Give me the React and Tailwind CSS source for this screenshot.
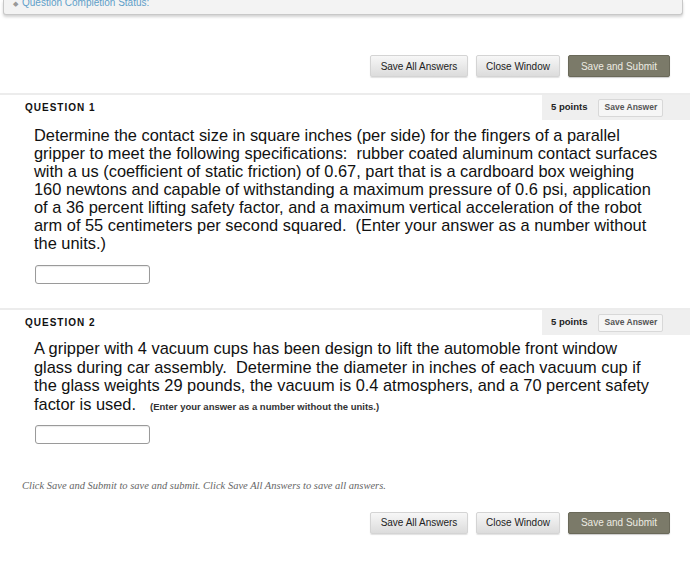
import React from 'react';

const btn =
  'h-[22px] whitespace-nowrap rounded-[2px] border border-[#d4d4d4] bg-gradient-to-b from-[#f7f7f7] to-[#dcdcdc] text-[10px] text-[#222] shadow-[0_1px_1px_rgba(0,0,0,0.12)]';
const submitBtn =
  'h-[22px] whitespace-nowrap rounded-[2px] border border-[#6a6959] bg-[#7b7a69] text-[10px] text-[#ecebe2] shadow-[0_1px_1px_rgba(0,0,0,0.2)]';

const ActionBar = () => (
  <div className="flex justify-end gap-2 pr-[30px]">
    <button className={`${btn} w-[98px]`}>Save All Answers</button>
    <button className={`${btn} w-[84px]`}>Close Window</button>
    <button className={`${submitBtn} w-[102px]`}>Save and Submit</button>
  </div>
);

const QuestionHeader = ({ number }) => (
  <div className="mr-[10px] flex items-stretch justify-between border-t-2 border-[#ececec]">
    <div className="flex items-center pl-[25px] text-[10px] font-bold tracking-[1px] text-[#111]">
      QUESTION {number}
    </div>
    <div className="flex h-[25px] w-[148px] items-center bg-[#efefef] pl-[9px]">
      <span className="whitespace-nowrap text-[9.5px] font-bold text-[#222]">5 points</span>
      <button className="ml-[11px] h-[18px] w-[65px] whitespace-nowrap rounded-[2px] border border-[#d8d8d8] bg-[#f6f6f6] text-[8.5px] font-bold text-[#555]">
        Save Answer
      </button>
    </div>
  </div>
);

const AnswerBox = () => (
  <div className="ml-[35px] h-[19px] w-[115px] rounded-[3px] border border-[#9a9a9a] bg-white shadow-[inset_0_1px_1px_rgba(0,0,0,0.08)]" />
);

const q1Lines = [
  'Determine the contact size in square inches (per side) for the fingers of a parallel',
  'gripper to meet the following specifications:\u00a0 rubber coated aluminum contact surfaces',
  'with a us (coefficient of static friction) of 0.67, part that is a cardboard box weighing',
  '160 newtons and capable of withstanding a maximum pressure of 0.6 psi, application',
  'of a 36 percent lifting safety factor, and a maximum vertical acceleration of the robot',
  'arm of 55 centimeters per second squared.\u00a0 (Enter your answer as a number without',
  'the units.)',
];

const q2Lines = [
  'A gripper with 4 vacuum cups has been design to lift the automoble front window',
  'glass during car assembly.\u00a0 Determine the diameter in inches of each vacuum cup if',
  'the glass weights 29 pounds, the vacuum is 0.4 atmosphers, and a 70 percent safety',
];

export default function App() {
  return (
    <div
      className="h-[571px] w-[700px] overflow-hidden bg-white"
      style={{ fontFamily: '"Liberation Sans", Arial, sans-serif' }}
    >
      <div className="mx-[3px] mr-[17px] flex h-[15px] items-end overflow-hidden rounded-b-[3px] border border-t-0 border-[#c8c8c8] bg-[#f3f3f3] pb-[6px] pl-[9px] shadow-[0_2px_3px_rgba(0,0,0,0.18)]">
        <span className="text-[10px] leading-none text-[#5f9fc9]">
          <span className="mr-1 text-[7px] text-[#999]">◆</span>Question Completion Status:
        </span>
      </div>

      <div className="mt-[40px]">
        <ActionBar />
      </div>

      <div className="mt-[16px]">
        <QuestionHeader number={1} />
        <div className="ml-[34px] mt-[6px] whitespace-nowrap text-[16.4px] leading-[18px] text-[#111]">
          {q1Lines.map((line) => (
            <div key={line}>{line}</div>
          ))}
        </div>
        <div className="mt-[13px]">
          <AnswerBox />
        </div>
      </div>

      <div className="mt-[24px]">
        <QuestionHeader number={2} />
        <div className="ml-[34px] mt-[4px] whitespace-nowrap text-[16.4px] leading-[18.5px] text-[#111]">
          {q2Lines.map((line) => (
            <div key={line}>{line}</div>
          ))}
          <div>
            factor is used.
            <span className="ml-[14px] text-[9.5px] font-bold text-[#333]">
              (Enter your answer as a number without the units.)
            </span>
          </div>
        </div>
        <div className="mt-[9px]">
          <AnswerBox />
        </div>
      </div>

      <p
        className="ml-[22px] mt-[34px] text-[10.5px] italic text-[#666]"
        style={{ fontFamily: '"Liberation Serif", "Times New Roman", serif' }}
      >
        Click Save and Submit to save and submit. Click Save All Answers to save all answers.
      </p>

      <div className="mt-[18px]">
        <ActionBar />
      </div>
    </div>
  );
}
